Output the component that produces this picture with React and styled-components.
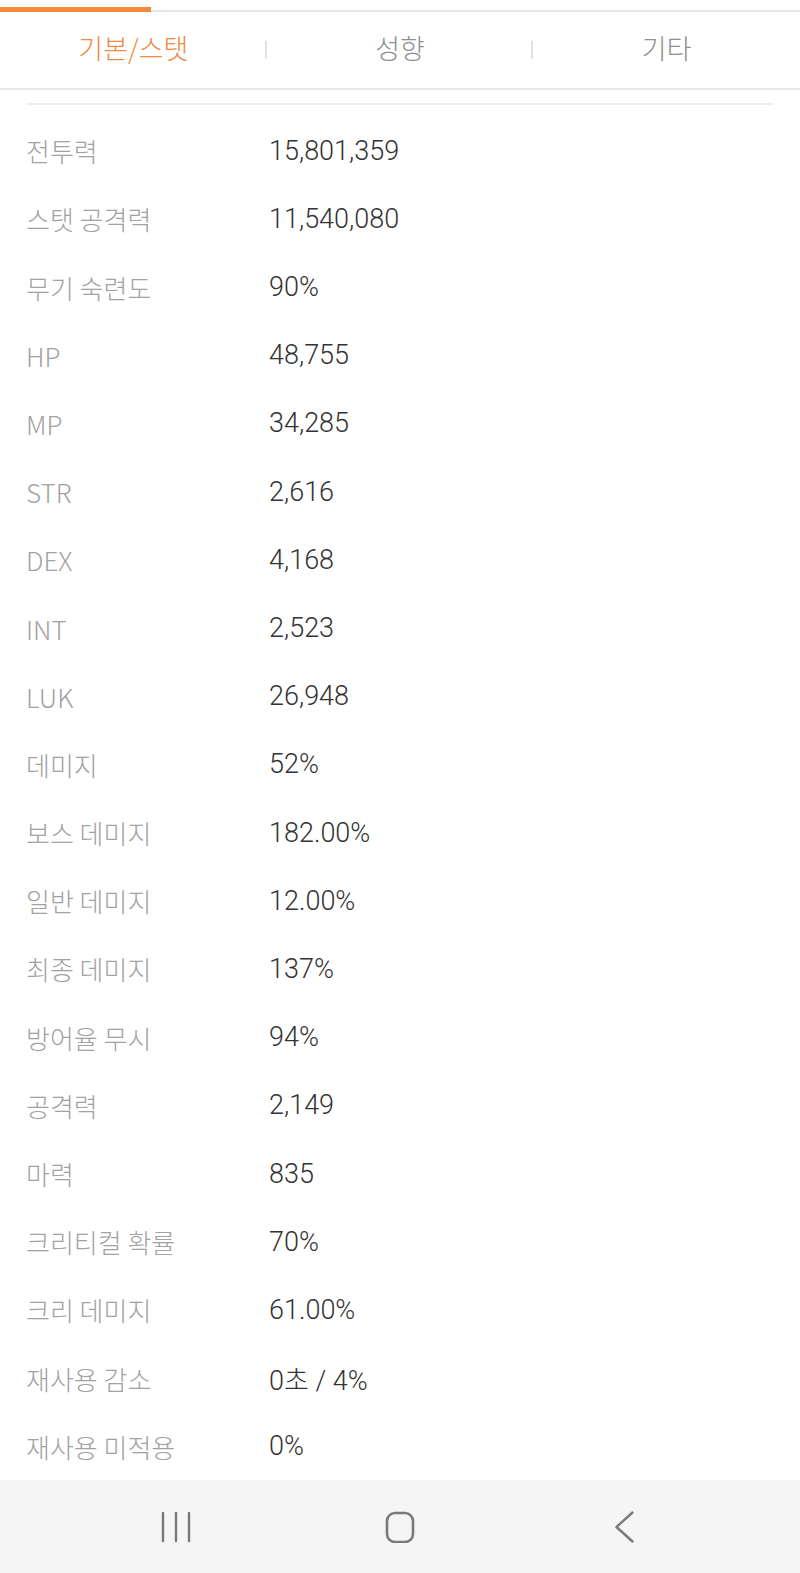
import React from 'react';
import styled, { createGlobalStyle } from 'styled-components';

const GlobalStyle = createGlobalStyle`
  html, body {
    margin: 0;
    padding: 0;
    background: #ffffff;
  }
  body {
    font-family: "Noto Sans CJK KR", "Noto Sans", Roboto, sans-serif;
  }
`;

const Page = styled.div`
  width: 800px;
  height: 1573px;
  display: flex;
  flex-direction: column;
  background: #ffffff;
`;

const TopStrip = styled.div`
  height: 7px;
`;

const IndicatorTrack = styled.div`
  position: relative;
  height: 5px;
  &::after {
    content: '';
    position: absolute;
    left: 0;
    right: 0;
    bottom: 0;
    height: 2px;
    background: #e6e6e6;
  }
`;

const Indicator = styled.div`
  position: absolute;
  left: 0;
  top: 0;
  width: 151px;
  height: 5px;
  background: #f3893a;
  z-index: 1;
`;

const Tabs = styled.div`
  display: grid;
  grid-template-columns: repeat(3, 1fr);
  height: 76px;
  border-bottom: 2px solid #e8e8e8;
`;

const Tab = styled.div`
  position: relative;
  display: flex;
  align-items: center;
  justify-content: center;
  font-size: 27px;
  font-weight: 300;
  color: ${p => (p.active ? '#ee8a43' : '#8f8f8f')};
  padding-bottom: 4px;
  &:not(:last-child)::after {
    content: '';
    position: absolute;
    right: 0;
    top: 29px;
    width: 2px;
    height: 18px;
    background: #e2e2e2;
  }
`;

const Content = styled.div`
  flex: 1;
  padding: 13px 26px 0;
`;

const Divider = styled.div`
  height: 2px;
  background: #efefef;
`;

const List = styled.div`
  padding-top: 12px;
`;

const Row = styled.div`
  display: grid;
  grid-template-columns: 243px 1fr;
  align-items: center;
  height: 68.2px;
`;

const Label = styled.div`
  font-size: 26px;
  font-weight: 300;
  color: #a2a2a2;
`;

const Value = styled.div`
  font-family: Roboto, "Noto Sans CJK KR", sans-serif;
  font-size: 27px;
  font-weight: 300;
  color: #333333;
`;

const NavBar = styled.div`
  height: 93px;
  background: #f5f5f5;
  display: grid;
  grid-template-columns: repeat(3, 1fr);
  align-items: center;
  justify-items: center;
  padding: 0 64px;
`;

const NavIcon = styled.svg`
  display: block;
`;

const stats = [
  ['전투력', '15,801,359'],
  ['스탯 공격력', '11,540,080'],
  ['무기 숙련도', '90%'],
  ['HP', '48,755'],
  ['MP', '34,285'],
  ['STR', '2,616'],
  ['DEX', '4,168'],
  ['INT', '2,523'],
  ['LUK', '26,948'],
  ['데미지', '52%'],
  ['보스 데미지', '182.00%'],
  ['일반 데미지', '12.00%'],
  ['최종 데미지', '137%'],
  ['방어율 무시', '94%'],
  ['공격력', '2,149'],
  ['마력', '835'],
  ['크리티컬 확률', '70%'],
  ['크리 데미지', '61.00%'],
  ['재사용 감소', '0초 / 4%'],
  ['재사용 미적용', '0%'],
];

const App = () => {
  return (
    <>
      <GlobalStyle />
      <Page>
        <TopStrip />
        <IndicatorTrack>
          <Indicator />
        </IndicatorTrack>
        <Tabs>
          <Tab active>기본/스탯</Tab>
          <Tab>성향</Tab>
          <Tab>기타</Tab>
        </Tabs>
        <Content>
          <Divider />
          <List>
            {stats.map(([label, value]) => (
              <Row key={label}>
                <Label>{label}</Label>
                <Value>{value}</Value>
              </Row>
            ))}
          </List>
        </Content>
        <NavBar>
          <NavIcon width="32" height="32" viewBox="0 0 32 32" fill="none" stroke="#7a7a7a" strokeWidth="2.4" strokeLinecap="round">
            <path d="M3 2v28M16 2v28M29 2v28" />
          </NavIcon>
          <NavIcon width="32" height="32" viewBox="0 0 32 32" fill="none" stroke="#7a7a7a" strokeWidth="2.6">
            <rect x="3" y="2" width="26" height="29" rx="8" />
          </NavIcon>
          <NavIcon width="32" height="32" viewBox="0 0 32 32" fill="none" stroke="#7a7a7a" strokeWidth="2.4" strokeLinecap="round" strokeLinejoin="round">
            <path d="M24.5 1.5L8.5 16l16 14.5" />
          </NavIcon>
        </NavBar>
      </Page>
    </>
  );
};

export default App;
